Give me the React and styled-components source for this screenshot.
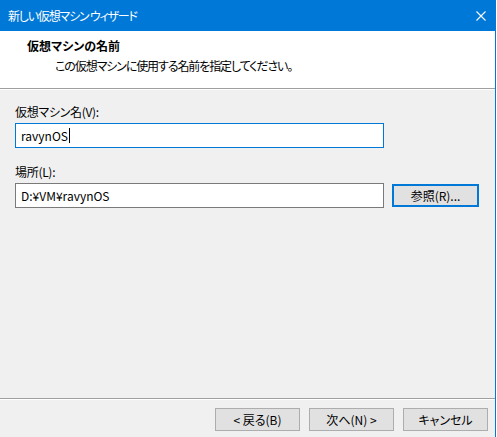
import React from "react";
import styled, { createGlobalStyle } from "styled-components";

const Global = createGlobalStyle`
  html, body { margin: 0; padding: 0; background: #ffffff; }
  body {
    font-family: "Noto Sans CJK JP", "Noto Sans", sans-serif;
    font-size: 12px;
    font-feature-settings: "palt";
    color: #000;
  }
`;

const Window = styled.div`
  width: 496px;
  height: 437px;
  box-sizing: border-box;
  border-right: 1px solid #0078d7;
  background: #f0f0f0;
  display: flex;
  flex-direction: column;
  overflow: hidden;
`;

const TitleBar = styled.div`
  height: 31px;
  flex: none;
  background: #0078d7;
  color: #fff;
  display: flex;
  align-items: center;
  justify-content: space-between;
  padding: 0 9px 0 8px;
  font-size: 12px;
  line-height: 16px;
  letter-spacing: -1.2px;
`;

const CloseIcon = () => (
  <svg width="10" height="10" viewBox="0 0 10 10" style={{ display: "block" }}>
    <path d="M0.5 0.5 L9.5 9.5 M9.5 0.5 L0.5 9.5" stroke="#fff" strokeWidth="1.1" fill="none" />
  </svg>
);

const Header = styled.div`
  height: 57px;
  flex: none;
  background: #fff;
  box-sizing: border-box;
  padding: 7px 0 0 27px;
  display: flex;
  flex-direction: column;
  gap: 4px;
`;

const HeaderTitle = styled.div`
  font-weight: bold;
  line-height: 16px;
`;

const HeaderSub = styled.div`
  line-height: 16px;
  padding-left: 28px;
  letter-spacing: -1.1px;
`;

const Separator = styled.div`
  flex: none;
  height: 1px;
  background: #a0a0a0;
  border-bottom: 1px solid #fff;
`;

const Body = styled.div`
  flex: 1;
  padding: 14px 0 0 15px;
  display: flex;
  flex-direction: column;
`;

const Label = styled.div`
  line-height: 16px;
  margin-top: ${(p) => p.$top || 0}px;
  margin-bottom: 3px;
  letter-spacing: -0.3px;
`;

const Row = styled.div`
  display: flex;
  align-items: flex-start;
  gap: 8px;
`;

const Field = styled.div`
  width: 369px;
  height: 25px;
  box-sizing: border-box;
  background: #fff;
  border: 1px solid ${(p) => (p.$focus ? "#0078d7" : "#7a7a7a")};
  display: flex;
  align-items: center;
  padding-left: 5px;
  line-height: 16px;
`;

const Caret = styled.span`
  display: inline-block;
  width: 1px;
  height: 15px;
  background: #000;
  margin-left: 1px;
`;

const Button = styled.div`
  width: ${(p) => p.$w || 85}px;
  height: 23px;
  box-sizing: border-box;
  background: #e1e1e1;
  border: ${(p) => (p.$default ? "2px solid #0078d7" : "1px solid #adadad")};
  display: flex;
  align-items: center;
  justify-content: center;
  line-height: 16px;
  white-space: pre;
  margin-top: ${(p) => p.$top || 0}px;
`;

const Footer = styled.div`
  flex: none;
  height: 37px;
  box-sizing: border-box;
  padding: 8px 7px 0 0;
  display: flex;
  justify-content: flex-end;
  gap: 9px;
`;

export default function App() {
  return (
    <>
      <Global />
      <Window>
        <TitleBar>
          <span>新しい仮想マシン ウィザード</span>
          <CloseIcon />
        </TitleBar>
        <Header>
          <HeaderTitle>仮想マシンの名前</HeaderTitle>
          <HeaderSub>この仮想マシンに使用する名前を指定してください。</HeaderSub>
        </Header>
        <Separator />
        <Body>
          <Label>仮想マシン名(V):</Label>
          <Field $focus>
            ravynOS
            <Caret />
          </Field>
          <Label $top={16}>場所(L):</Label>
          <Row>
            <Field>D:¥VM¥ravynOS</Field>
            <Button $default $w={87} $top={1}>
              {"参照(R)..."}
            </Button>
          </Row>
        </Body>
        <Separator />
        <Footer>
          <Button>{"< 戻る(B)"}</Button>
          <Button>{"次へ(N) >"}</Button>
          <Button>キャンセル</Button>
        </Footer>
      </Window>
    </>
  );
}
